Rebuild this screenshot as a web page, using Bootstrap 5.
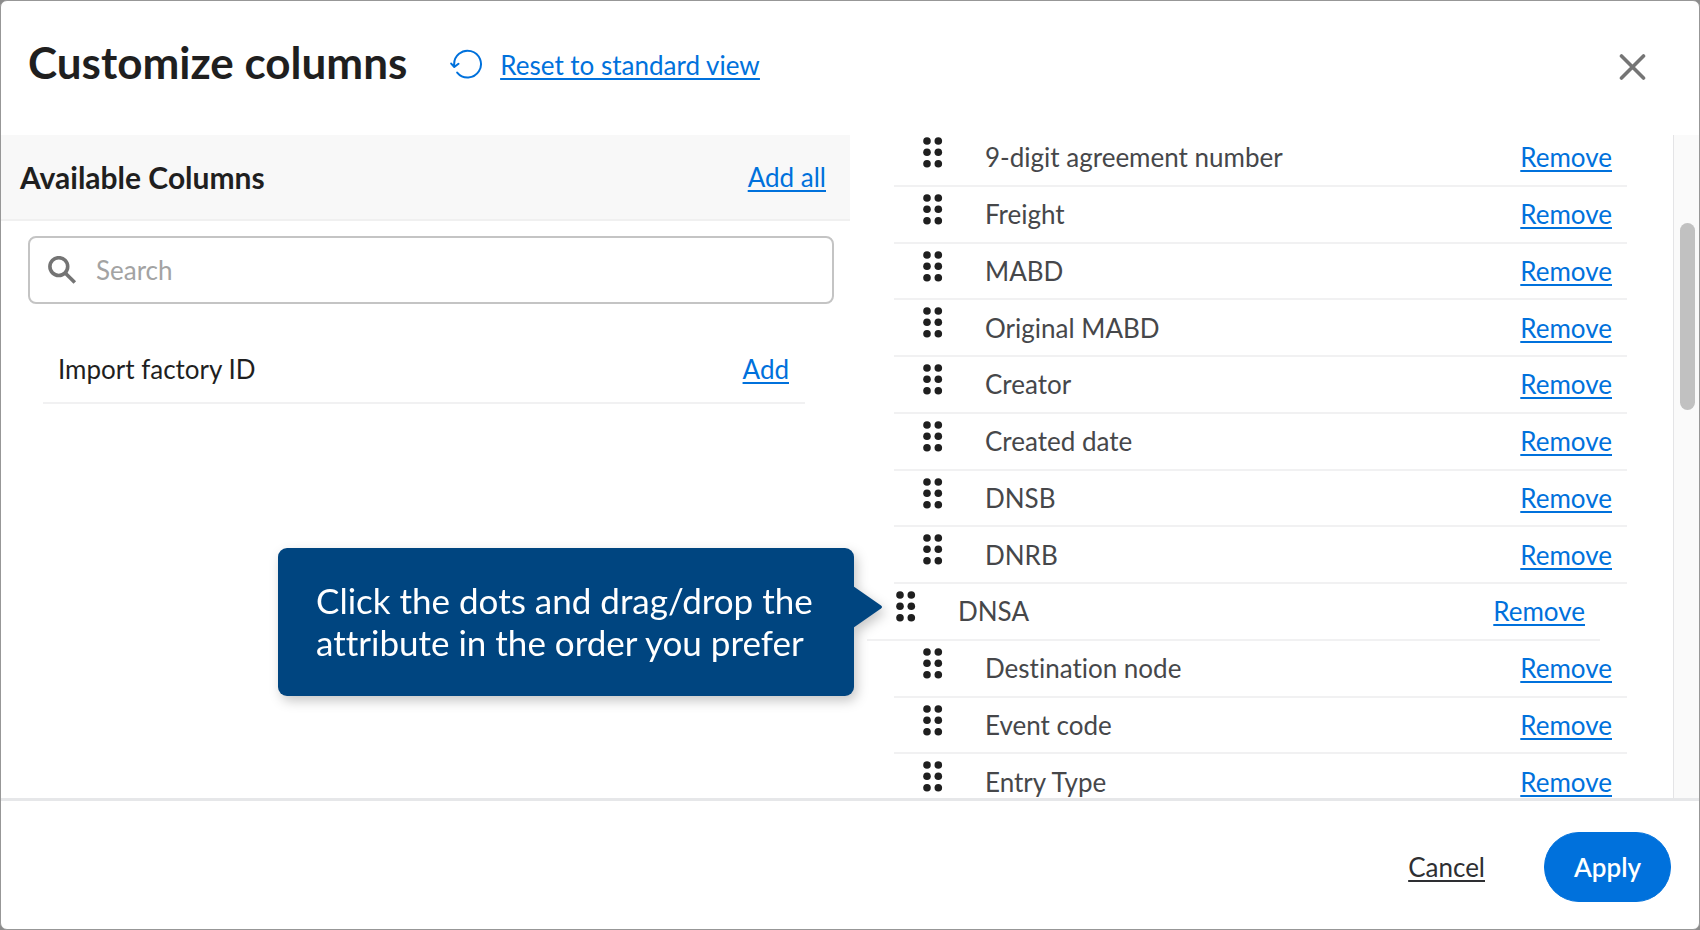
<!DOCTYPE html>
<html lang="en">
<head>
<meta charset="utf-8">
<meta name="viewport" content="width=device-width, initial-scale=1">
<title>Customize columns</title>
<link href="https://cdn.jsdelivr.net/npm/bootstrap@5.3.0/dist/css/bootstrap.min.css" rel="stylesheet">
<style>
  body { font-family: Lato, "Open Sans", sans-serif; font-size: 26px; line-height: 32px; font-variant-ligatures: none; color: #1f1f1f; background: #8c8c8c; }
  a { color: #0071dc; text-decoration-thickness: 2px; text-underline-offset: 3px; }
  .dialog-panel { border: 1px solid #979797; border-radius: 7px; background: #fff; }
  .dialog-head { height: 134px; padding: 0 53px 12px 27px; }
  .dialog-title { font-size: 44px; line-height: 52px; font-weight: 700; }
  .reset-link { margin-left: 42px; padding-top: 5px; gap: 17px; }
  .pane-head { height: 86px; padding: 0 24px 0 19px; background: #f8f8f8; border-bottom: 2px solid #f0f0f0; }
  .pane-title { font-size: 30px; line-height: 36px; font-weight: 700; }
  .search-box { margin: 15px 16px 0 27px; height: 68px; padding: 0 18px; gap: 19px; border: 2px solid #c4c4c4; border-radius: 8px; }
  .search-box input { font-size: 26px; color: #1f1f1f; }
  .search-box input::placeholder { color: #a3a3a3; opacity: 1; }
  .available-row { margin: 31px 45px 0 42px; height: 69px; padding: 0 16px 0 15px; border-bottom: 2px solid #f1f1f2; }
  .selected-list { margin: -5px 46px -13px 44px; color: #46474a; }
  .column-row { min-height: 0; padding: 0 15px 0 29px; border-bottom: 2px solid #f1f1f2; }
  .column-row.dragging { margin: 0 27px 0 -27px; }
  .grip { margin: 7px 42px 0 0; cursor: grab; }
  .scroll-track { width: 26px; padding: 88px 4px 0 6px; background: #fafafa; border-left: 1px solid #e4e4e6; }
  .scroll-thumb { height: 187px; border-radius: 8px; background: #c1c1c1; }
  .dialog-foot { padding: 31px 28px 27px; border-top: 3px solid #e6e7e9; gap: 59px; }
  .cancel-btn, .cancel-btn:hover { color: #2e2f32; font-size: 26px; line-height: 32px; text-decoration: underline 2px; text-underline-offset: 3px; }
  .apply-btn { width: 127px; height: 70px; font-size: 26px; font-weight: 600; --bs-btn-bg: #0071dc; --bs-btn-border-color: #0071dc; }
  .hint { right: calc(50% - 4px); bottom: 102px; width: 576px; padding: 31px 20px 33px 38px; border-radius: 9px; background: #004580; color: #fff; font-size: 35px; line-height: 42px; white-space: nowrap; filter: drop-shadow(3px 5px 6px rgba(0,0,0,.22)); }
  .hint-arrow { left: 100%; top: 38px; margin-left: -1px; }
</style>
</head>
<body>
<main class="dialog-panel vh-100 d-flex flex-column overflow-hidden" role="dialog" aria-labelledby="dialogTitle">
  <header class="dialog-head d-flex align-items-center flex-shrink-0">
    <h1 class="dialog-title mb-0" id="dialogTitle">Customize columns</h1>
    <a href="#" class="reset-link d-flex align-items-center">
      <svg width="34" height="32" viewBox="0 0 34 32" fill="none" stroke="currentColor" stroke-width="2" stroke-linecap="round" stroke-linejoin="round" aria-hidden="true"><path d="M5.2 16A13.4 13.4 0 1 1 8.2 23.6M2.2 14.6L5.3 18L9.5 14.8"/></svg>
      <span class="text-decoration-underline">Reset to standard view</span>
    </a>
    <button type="button" class="btn p-0 border-0 ms-auto d-flex" aria-label="Close">
      <svg class="mt-2" width="27" height="27" viewBox="0 0 27 27" stroke="#757575" stroke-width="3.6" stroke-linecap="round" aria-hidden="true"><path d="M2.5 3l22 22M24.5 3l-22 22"/></svg>
    </button>
  </header>

  <div class="d-flex flex-fill position-relative" style="min-height:0">
    <section class="w-50" aria-labelledby="availableTitle">
      <div class="pane-head d-flex align-items-center justify-content-between">
        <h2 class="pane-title mb-0" id="availableTitle">Available Columns</h2>
        <a href="#">Add all</a>
      </div>
      <label class="search-box d-flex align-items-center">
        <svg class="flex-shrink-0" width="29" height="29" viewBox="0 0 29 29" fill="none" stroke="#747474" stroke-width="3.6" aria-hidden="true"><circle cx="10.8" cy="10.6" r="8.9"/><path d="M17.2 17l9.6 9.6"/></svg>
        <input type="search" class="form-control border-0 shadow-none bg-transparent p-0" placeholder="Search" aria-label="Search">
      </label>
      <div class="available-row d-flex align-items-center justify-content-between">
        <span>Import factory ID</span><a href="#">Add</a>
      </div>
    </section>

    <section class="w-50 d-flex overflow-hidden" aria-label="Selected columns">
      <ul class="selected-list list-unstyled flex-fill d-flex flex-column" id="selectedList"></ul>
      <div class="scroll-track flex-shrink-0"><div class="scroll-thumb"></div></div>
    </section>

    <div class="hint position-absolute" role="tooltip">
      Click the dots and drag/drop the<br>attribute in the order you prefer
      <svg class="hint-arrow position-absolute" width="30" height="42" viewBox="0 0 30 42" fill="#004580" aria-hidden="true"><path d="M0 0L28 19.5Q30 21 28 22.5L0 42Z"/></svg>
    </div>
  </div>

  <footer class="dialog-foot d-flex align-items-center justify-content-end flex-shrink-0">
    <button type="button" class="cancel-btn btn p-0 border-0">Cancel</button>
    <button type="button" class="apply-btn btn btn-primary rounded-pill p-0">Apply</button>
  </footer>
</main>

<script src="https://cdn.jsdelivr.net/npm/bootstrap@5.3.0/dist/js/bootstrap.bundle.min.js"></script>
<script>
  const columns = ["9-digit agreement number", "Freight", "MABD", "Original MABD", "Creator", "Created date",
    "DNSB", "DNRB", "DNSA", "Destination node", "Event code", "Entry Type"];
  const dragged = "DNSA";
  const dots = [4, 15.3, 26.7].map(y => `<circle cx="4" cy="${y}" r="3.8"/><circle cx="15.3" cy="${y}" r="3.8"/>`).join("");
  document.getElementById("selectedList").innerHTML = columns.map(name => `
    <li class="column-row d-flex align-items-center${name === dragged ? " dragging" : ""}" style="flex:1 1 0">
      <svg class="grip align-self-start flex-shrink-0" width="20" height="31" viewBox="0 0 20 31" fill="#1f1f1f" aria-hidden="true">${dots}</svg>
      <span class="flex-fill">${name}</span>
      <a href="#">Remove</a>
    </li>`).join("");
</script>
</body>
</html>
